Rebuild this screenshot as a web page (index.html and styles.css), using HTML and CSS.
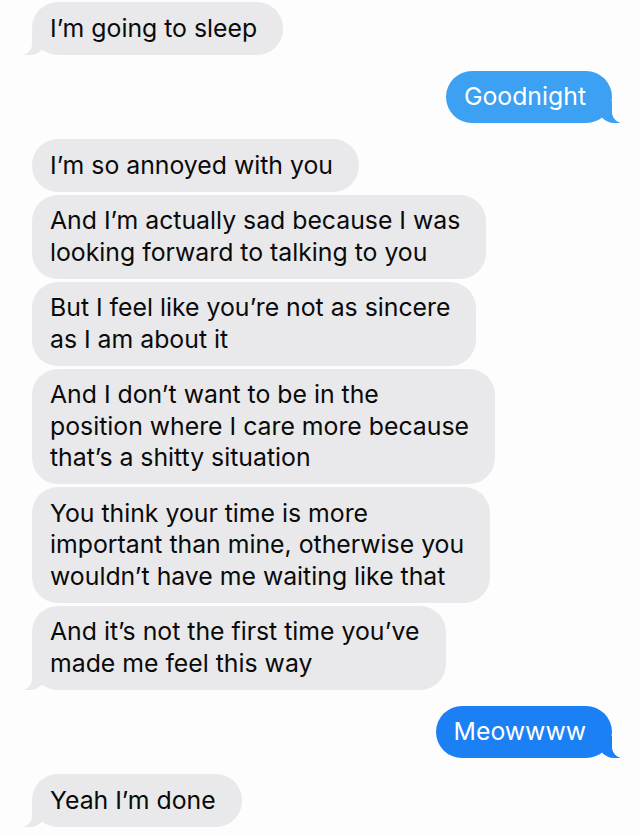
FILE: index.html
```html
<!DOCTYPE html>
<html>
  <head>
    <title>Messages</title>
    <link rel="stylesheet" href="styles.css">
  </head>
  <body>
    <div class="thread">
      <div class="group">
        <div class="bubble them tail">I’m going to sleep</div>
      </div>

      <div class="group">
        <div class="bubble me light tail">Goodnight</div>
      </div>

      <div class="group">
        <div class="bubble them">I’m so annoyed with you</div>
        <div class="bubble them">And I’m actually sad because I was<br>looking forward to talking to you</div>
        <div class="bubble them">But I feel like you’re not as sincere<br>as I am about it</div>
        <div class="bubble them">And I don’t want to be in the<br>position where I care more because<br>that’s a shitty situation</div>
        <div class="bubble them">You think your time is more<br>important than mine, otherwise you<br>wouldn’t have me waiting like that</div>
        <div class="bubble them tail">And it’s not the first time you’ve<br>made me feel this way</div>
      </div>

      <div class="group">
        <div class="bubble me tail">Meowwww</div>
      </div>

      <div class="group">
        <div class="bubble them tail">Yeah I’m done</div>
      </div>
    </div>
  </body>
</html>
```

FILE: styles.css
```css
body {
  margin: 0;
  background: #fdfdfd;
  font-family: Inter, "Liberation Sans", sans-serif;
}

.thread {
  display: flex;
  flex-direction: column;
  gap: 16px;
  padding: 2px 28px 0 32px;
}

.group {
  display: flex;
  flex-direction: column;
  gap: 3px;
}

.bubble {
  position: relative;
  max-width: 480px;
  padding: 10.5px 26px 10.5px 18px;
  border-radius: 26px;
  font-size: 24.8px;
  line-height: 31.5px;
}

.them {
  align-self: flex-start;
  background: #e9e9eb;
  color: #0a0a0a;
}

.me {
  align-self: flex-end;
  padding: 10.5px 26px 10.5px 18px;
  background: #1c80f5;
  color: #fff;
}

.me.light {
  background: #3ca0f3;
}

/* the little curled tail on the last bubble of a run */
.tail::before,
.tail::after {
  content: "";
  position: absolute;
  bottom: 0;
  height: 22px;
}

.them.tail::before {
  left: -8px;
  width: 22px;
  background: #e9e9eb;
  border-bottom-right-radius: 16px;
}

.them.tail::after {
  left: -12px;
  width: 12px;
  background: #fdfdfd;
  border-bottom-right-radius: 11px;
}

.me.tail::before {
  right: -8px;
  width: 22px;
  background: inherit;
  border-bottom-left-radius: 16px;
}

.me.tail::after {
  right: -12px;
  width: 12px;
  background: #fdfdfd;
  border-bottom-left-radius: 11px;
}
```
